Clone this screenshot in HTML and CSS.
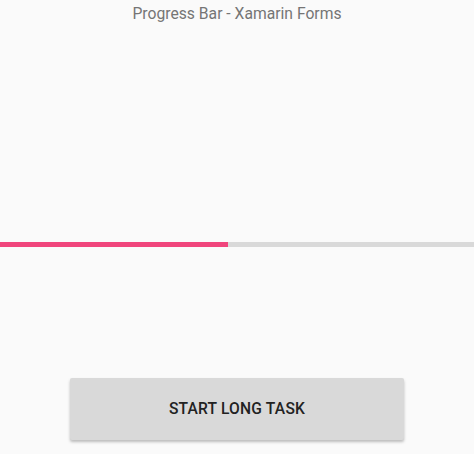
FILE: index.html
```html
<!DOCTYPE html>
<html>
<head>
<meta charset="utf-8">
<link rel="stylesheet" href="styles.css">
</head>
<body>
<div class="page">
  <div class="title">Progress Bar - Xamarin Forms</div>
  <div class="progress"><div class="fill" style="width:48.1%"></div></div>
  <div class="actions"><button class="btn">START LONG TASK</button></div>
</div>
</body>
</html>
```
FILE: styles.css
```css
html, body { margin: 0; padding: 0; background: #fafafa; }
.page { width: 474px; height: 454px; display: flex; flex-direction: column; font-family: Roboto, "Liberation Sans", sans-serif; }
.title { text-align: center; color: #757575; font-size: 15.7px; line-height: 20px; padding-top: 4px; }
.progress { margin-top: 218px; height: 5px; background: #d9d9d9; }
.fill { height: 100%; background: #f0457c; }
.actions { display: flex; justify-content: center; padding-top: 131px; }
.btn { width: 334px; height: 62px; border: none; border-radius: 2px; background: #d9d9d9; color: #222; font-family: Roboto, "Liberation Sans", sans-serif; font-weight: 500; font-size: 15.6px; letter-spacing: 0.2px; box-shadow: 0 2px 3px rgba(0,0,0,0.25); }
```
